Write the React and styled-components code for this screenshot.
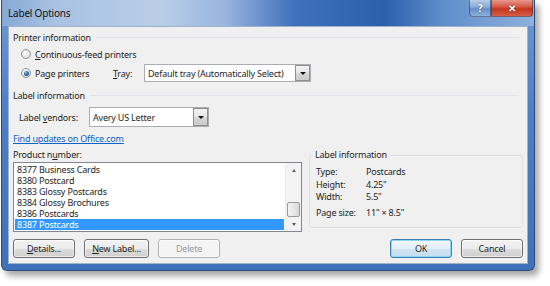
import styled, { createGlobalStyle } from 'styled-components';

const GlobalStyle = createGlobalStyle`
  html, body {
    margin: 0;
    padding: 0;
    background: #ffffff;
  }
  body {
    width: 550px;
    height: 286px;
    overflow: hidden;
    font-family: "Noto Sans", "Open Sans", sans-serif;
    font-size: 9px;
    letter-spacing: -0.2px;
    color: #1e1e1e;
  }
`;

const Page = styled.div`
  padding: 0 0 0 1px;
`;

const Window = styled.div`
  width: 534px;
  height: 271px;
  display: flex;
  flex-direction: column;
  background: linear-gradient(180deg, #6f9bd3 0%, #4f80c4 40%, #3f71b9 100%);
  border: 1px solid #2b4b78;
  border-top: none;
  border-radius: 0 0 6px 6px;
  box-shadow: 4px 5px 6px rgba(0, 0, 0, 0.35);
  box-sizing: border-box;
`;

const TitleBar = styled.div`
  height: 26px;
  flex-shrink: 0;
  display: flex;
  align-items: flex-start;
  padding-left: 6px;
  background: linear-gradient(90deg,
    #86a9d6 0%, #a9c2e3 10%, #b9cde8 30%, #97b5de 42%,
    #3f71bb 55%, #2c60ab 72%, #5f8ecb 83%, #8fb1dc 100%);
`;

const Title = styled.div`
  flex: 1;
  line-height: 26px;
  font-size: 10px;
  color: #111;
`;

const CaptionButtons = styled.div`
  display: flex;
  margin-right: 1px;
`;

const CaptionButton = styled.div`
  width: ${p => (p.$close ? 42 : 22)}px;
  height: 17px;
  display: flex;
  align-items: center;
  justify-content: center;
  border: 1px solid rgba(40, 60, 90, 0.6);
  border-top: none;
  border-radius: ${p => (p.$close ? '0 0 4px 0' : '0 0 0 4px')};
  box-sizing: border-box;
  color: #fff;
  font-weight: bold;
  font-size: 10px;
  text-shadow: 0 0 2px rgba(0, 0, 0, 0.6);
  background: ${p => (p.$close
    ? 'linear-gradient(180deg, #e59a8c 0%, #d6533f 45%, #c4351f 55%, #d85c43 100%)'
    : 'linear-gradient(180deg, #b8cde8 0%, #8aaad6 45%, #6a8fc6 55%, #8db0dc 100%)')};
`;

const Client = styled.div`
  flex: 1;
  margin: 0 6px 6px 6px;
  background: #f0f0f0;
  border: 1px solid #9fb3cc;
  padding: 3px 4px 5px 4px;
  display: flex;
  flex-direction: column;
`;

const SectionHeader = styled.div`
  display: flex;
  align-items: center;
  gap: 5px;
  height: 14px;
  margin-top: ${p => p.$mt || 0}px;
  margin-right: 4px;
  &::after {
    content: '';
    flex: 1;
    height: 1px;
    background: #dfe4ea;
  }
`;

const Row = styled.div`
  display: flex;
  align-items: center;
  height: ${p => p.$h || 16}px;
  margin-top: ${p => p.$mt || 0}px;
  padding-left: ${p => p.$pl || 0}px;
`;

const RadioWrap = styled.div`
  display: flex;
  align-items: center;
  gap: 4px;
  width: ${p => p.$w || 'auto'};
`;

const Radio = styled.span`
  width: 10px;
  height: 10px;
  border-radius: 50%;
  border: 1px solid #8f9499;
  background: radial-gradient(circle at 40% 35%, #ffffff 0%, #e4e4e4 60%, #cfd1d3 100%);
  display: flex;
  align-items: center;
  justify-content: center;
  box-sizing: border-box;
  &::after {
    content: '';
    display: ${p => (p.$checked ? 'block' : 'none')};
    width: 5px;
    height: 5px;
    border-radius: 50%;
    background: radial-gradient(circle at 40% 35%, #9ccaf0 0%, #2d6aa5 45%, #1a3f66 100%);
  }
`;

const Key = styled.span`
  text-decoration: underline;
`;

const FieldLabel = styled.span`
  width: ${p => p.$w}px;
  flex-shrink: 0;
`;

const Combo = styled.div`
  width: ${p => p.$w}px;
  height: ${p => p.$h}px;
  display: flex;
  background: #fff;
  border: 1px solid #abadb3;
  box-sizing: border-box;
`;

const ComboText = styled.div`
  flex: 1;
  display: flex;
  align-items: center;
  padding-left: 3px;
  white-space: nowrap;
  overflow: hidden;
`;

const ComboButton = styled.div`
  width: 13px;
  display: flex;
  align-items: center;
  justify-content: center;
  border: 1px solid #8e8f8f;
  background: linear-gradient(180deg, #f2f2f2 0%, #e6e6e6 50%, #d7d7d7 51%, #cbcbcb 100%);
  &::after {
    content: '';
    border-left: 3px solid transparent;
    border-right: 3px solid transparent;
    border-top: 3px solid #111;
  }
`;

const Link = styled.a`
  color: #0a64c8;
  text-decoration: underline;
  height: 14px;
  line-height: 14px;
  margin-top: 5px;
  align-self: flex-start;
`;

const Columns = styled.div`
  display: flex;
  gap: 7px;
  margin-top: 2px;
`;

const LeftCol = styled.div`
  width: 289px;
  display: flex;
  flex-direction: column;
`;

const Caption = styled.div`
  height: 14px;
  line-height: 14px;
`;

const ListBox = styled.div`
  height: 70px;
  display: flex;
  background: #fff;
  border: 1px solid #828790;
  box-sizing: border-box;
`;

const Items = styled.div`
  flex: 1;
  padding: 1px 1px;
`;

const Item = styled.div`
  height: 11px;
  line-height: 11px;
  padding-left: 2px;
  white-space: nowrap;
  background: ${p => (p.$selected ? '#3399ff' : 'transparent')};
  color: ${p => (p.$selected ? '#fff' : '#1e1e1e')};
`;

const ScrollBar = styled.div`
  width: 15px;
  display: flex;
  flex-direction: column;
  background: #f3f3f3;
  border-left: 1px solid #ececec;
`;

const ScrollArrow = styled.div`
  height: 14px;
  display: flex;
  align-items: center;
  justify-content: center;
  &::after {
    content: '';
    border-left: 2.5px solid transparent;
    border-right: 2.5px solid transparent;
    ${p => (p.$up ? 'border-bottom: 3px solid #606060;' : 'border-top: 3px solid #606060;')}
  }
`;

const Track = styled.div`
  flex: 1;
  display: flex;
  flex-direction: column;
  justify-content: flex-end;
  padding: 0 1px;
`;

const Thumb = styled.div`
  height: 15px;
  border: 1px solid #9a9a9a;
  border-radius: 2px;
  background: linear-gradient(90deg, #f3f3f3 0%, #e8e8e8 50%, #d8d8d8 100%);
  box-sizing: border-box;
`;

const InfoGroup = styled.div`
  flex: 1;
  height: 73px;
  margin-top: 7px;
  border: 1px solid #dcdfe3;
  border-radius: 3px;
  box-sizing: border-box;
  padding: 10px 0 0 6px;
  position: relative;
`;

const Legend = styled.span`
  position: absolute;
  top: -8px;
  left: 3px;
  padding: 0 2px;
  background: #f0f0f0;
  line-height: 14px;
`;

const InfoRow = styled.div`
  display: flex;
  height: 12.5px;
  line-height: 12.5px;
  margin-top: ${p => p.$mt || 0}px;
`;

const InfoKey = styled.span`
  width: 50px;
`;

const ButtonRow = styled.div`
  display: flex;
  margin-top: auto;
  gap: 9px;
`;

const Spacer = styled.div`
  flex: 1;
`;

const Button = styled.div`
  width: ${p => p.$w || 62}px;
  height: 19px;
  display: flex;
  align-items: center;
  justify-content: center;
  border: 1px solid ${p => (p.$default ? '#3c7fb1' : p.$disabled ? '#adb2b5' : '#707070')};
  border-radius: 3px;
  box-sizing: border-box;
  color: ${p => (p.$disabled ? '#9a9a9a' : '#1e1e1e')};
  background: ${p => (p.$disabled
    ? '#f4f4f4'
    : p.$default
      ? 'linear-gradient(180deg, #f2f8fc 0%, #e3eff8 50%, #d3e6f4 51%, #c4ddf0 100%)'
      : 'linear-gradient(180deg, #f2f2f2 0%, #ebebeb 50%, #dddddd 51%, #cfcfcf 100%)')};
  box-shadow: ${p => (p.$default ? 'inset 0 0 0 1px #8fd3f5' : 'inset 0 0 0 1px rgba(255,255,255,0.6)')};
`;

const products = [
  '8377 Business Cards',
  '8380 Postcard',
  '8383 Glossy Postcards',
  '8384 Glossy Brochures',
  '8386 Postcards',
  '8387 Postcards',
];

const info = [
  ['Type:', 'Postcards'],
  ['Height:', '4.25"'],
  ['Width:', '5.5"'],
  ['Page size:', '11" \u00d7 8.5"'],
];

export default function App() {
  return (
    <Page>
      <GlobalStyle />
      <Window>
        <TitleBar>
          <Title>Label Options</Title>
          <CaptionButtons>
            <CaptionButton>?</CaptionButton>
            <CaptionButton $close>✕</CaptionButton>
          </CaptionButtons>
        </TitleBar>
        <Client>
          <SectionHeader>Printer information</SectionHeader>
          <Row $mt={2} $pl={8}>
            <RadioWrap>
              <Radio />
              <span><Key>C</Key>ontinuous-feed printers</span>
            </RadioWrap>
          </Row>
          <Row $h={18} $mt={2} $pl={8}>
            <RadioWrap $w="92px">
              <Radio $checked />
              <span>Pa<Key>g</Key>e printers</span>
            </RadioWrap>
            <FieldLabel $w={31}><Key>T</Key>ray:</FieldLabel>
            <Combo $w={167} $h={18}>
              <ComboText>Default tray (Automatically Select)</ComboText>
              <ComboButton />
            </Combo>
          </Row>
          <SectionHeader $mt={6}>Label information</SectionHeader>
          <Row $h={20} $mt={5} $pl={6}>
            <FieldLabel $w={70}>Label <Key>v</Key>endors:</FieldLabel>
            <Combo $w={120} $h={20}>
              <ComboText>Avery US Letter</ComboText>
              <ComboButton />
            </Combo>
          </Row>
          <Link>Find updates on Office.com</Link>
          <Columns>
            <LeftCol>
              <Caption>Product n<Key>u</Key>mber:</Caption>
              <ListBox>
                <Items>
                  {products.map((p, i) => (
                    <Item key={p} $selected={i === products.length - 1}>{p}</Item>
                  ))}
                </Items>
                <ScrollBar>
                  <ScrollArrow $up />
                  <Track><Thumb /></Track>
                  <ScrollArrow />
                </ScrollBar>
              </ListBox>
            </LeftCol>
            <InfoGroup>
              <Legend>Label information</Legend>
              {info.map(([k, v], i) => (
                <InfoRow key={k} $mt={i === 3 ? 3 : 0}>
                  <InfoKey>{k}</InfoKey>
                  <span>{v}</span>
                </InfoRow>
              ))}
            </InfoGroup>
          </Columns>
          <ButtonRow>
            <Button><span><Key>D</Key>etails...</span></Button>
            <Button $w={65}><span><Key>N</Key>ew Label...</span></Button>
            <Button $disabled>Delete</Button>
            <Spacer />
            <Button $default>OK</Button>
            <Button>Cancel</Button>
          </ButtonRow>
        </Client>
      </Window>
    </Page>
  );
}
